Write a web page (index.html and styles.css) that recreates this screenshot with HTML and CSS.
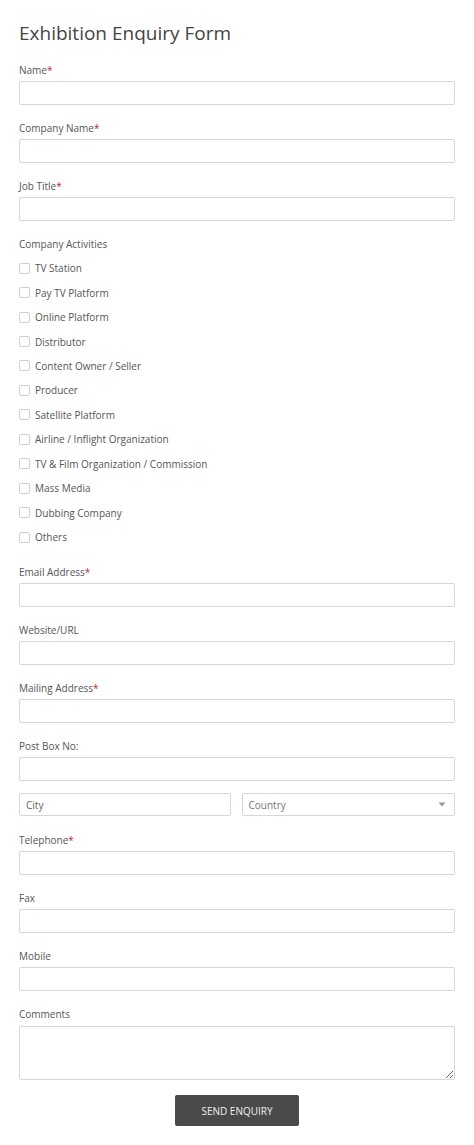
FILE: index.html
```html
<!DOCTYPE html>
<html lang="en">
<head>
<meta charset="utf-8">
<title>Exhibition Enquiry Form</title>
<link rel="stylesheet" href="styles.css">
</head>
<body>
<form class="form">
  <h1 class="title">Exhibition Enquiry Form</h1>

  <div class="field">
    <label class="label">Name<span class="req">*</span></label>
    <input class="input" type="text">
  </div>
  <div class="field">
    <label class="label">Company Name<span class="req">*</span></label>
    <input class="input" type="text">
  </div>
  <div class="field">
    <label class="label">Job Title<span class="req">*</span></label>
    <input class="input" type="text">
  </div>

  <div class="field">
    <label class="label">Company Activities</label>
    <div class="checks">
      <label class="check"><span class="box"></span>TV Station</label>
      <label class="check"><span class="box"></span>Pay TV Platform</label>
      <label class="check"><span class="box"></span>Online Platform</label>
      <label class="check"><span class="box"></span>Distributor</label>
      <label class="check"><span class="box"></span>Content Owner / Seller</label>
      <label class="check"><span class="box"></span>Producer</label>
      <label class="check"><span class="box"></span>Satellite Platform</label>
      <label class="check"><span class="box"></span>Airline / Inflight Organization</label>
      <label class="check"><span class="box"></span>TV &amp; Film Organization / Commission</label>
      <label class="check"><span class="box"></span>Mass Media</label>
      <label class="check"><span class="box"></span>Dubbing Company</label>
      <label class="check"><span class="box"></span>Others</label>
    </div>
  </div>

  <div class="field">
    <label class="label">Email Address<span class="req">*</span></label>
    <input class="input" type="text">
  </div>
  <div class="field">
    <label class="label">Website/URL</label>
    <input class="input" type="text">
  </div>
  <div class="field">
    <label class="label">Mailing Address<span class="req">*</span></label>
    <input class="input" type="text">
  </div>
  <div class="field field-tight">
    <label class="label">Post Box No:</label>
    <input class="input" type="text">
  </div>

  <div class="row">
    <div class="fake-input">City</div>
    <div class="fake-input select">Country
      <svg class="caret" width="8" height="5" viewBox="0 0 8 5"><path d="M0.5 0.5h7L4 4.5z" fill="#999"/></svg>
    </div>
  </div>

  <div class="field">
    <label class="label">Telephone<span class="req">*</span></label>
    <input class="input" type="text">
  </div>
  <div class="field">
    <label class="label">Fax</label>
    <input class="input" type="text">
  </div>
  <div class="field">
    <label class="label">Mobile</label>
    <input class="input" type="text">
  </div>
  <div class="field">
    <label class="label label-c">Comments</label>
    <textarea class="textarea"></textarea>
  </div>

  <div class="actions">
    <button class="btn" type="button">SEND ENQUIRY</button>
  </div>
</form>
</body>
</html>
```

FILE: styles.css
```css
* { box-sizing: border-box; }

html, body {
  margin: 0;
  padding: 0;
  background: #fff;
}

body {
  font-family: "Open Sans", "Liberation Sans", sans-serif;
  color: #555;
}

.form {
  padding: 0 19px 0 19px;
  display: flex;
  flex-direction: column;
}

.title {
  margin: 20px 0 0 0;
  font-size: 19px;
  font-weight: 400;
  line-height: 26px;
  color: #444;
  height: 42px;
}

.field {
  display: flex;
  flex-direction: column;
  margin-bottom: 15px;
}

.field-tight {
  margin-bottom: 12px;
}

.label {
  font-size: 10px;
  line-height: 16px;
  height: 16px;
  color: #555;
  margin-bottom: 3px;
}

.label-c {
  margin-bottom: 4px;
}

.req {
  color: #c0272d;
}

.input {
  display: block;
  width: 100%;
  height: 24px;
  border: 1px solid #d6d6d6;
  border-radius: 2px;
  background: #fff;
  margin: 0;
  padding: 0 6px;
  font: inherit;
}

.checks {
  display: flex;
  flex-direction: column;
  padding-top: 1px;
}

.check {
  display: flex;
  align-items: center;
  height: 24.45px;
  font-size: 10px;
  color: #555;
}

.box {
  width: 11px;
  height: 11px;
  border: 1px solid #cfcfcf;
  border-radius: 2px;
  background: #fff;
  margin-right: 5px;
  flex: none;
}

.row {
  display: flex;
  gap: 11px;
  margin-bottom: 16px;
}

.fake-input {
  flex: 1;
  height: 23px;
  border: 1px solid #d6d6d6;
  border-radius: 2px;
  padding: 0 6px;
  display: flex;
  align-items: center;
  font-size: 10px;
  color: #666;
}

.select {
  justify-content: space-between;
  padding-right: 8px;
  color: #777;
}

.caret {
  display: block;
}

.textarea {
  display: block;
  width: 100%;
  height: 54px;
  border: 1px solid #d6d6d6;
  border-radius: 2px;
  margin: 0;
  padding: 4px 6px;
  font: inherit;
  resize: vertical;
}

.actions {
  display: flex;
  justify-content: center;
}

.btn {
  width: 124px;
  height: 31px;
  background: #4a4a4a;
  color: #f0f0f0;
  border: none;
  border-radius: 2px;
  font-family: "Open Sans", "Liberation Sans", sans-serif;
  font-size: 10px;
  padding: 0;
}
```
